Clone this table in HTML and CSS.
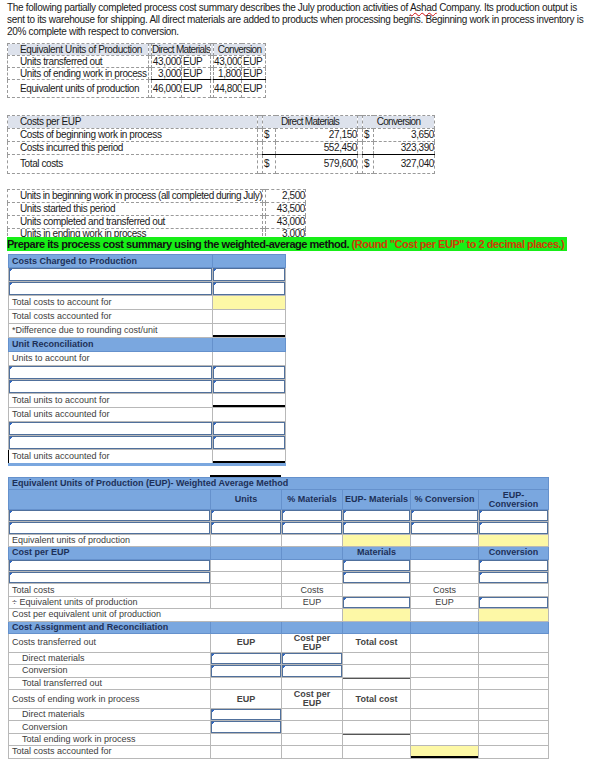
FILE: index.html
```html
<!DOCTYPE html>
<html lang="en">
<head>
    <meta charset="UTF-8">
    <title>Process Cost Summary - Ashad Company</title>
    <link rel="stylesheet" href="styles.css">
</head>
<body>
    <p class="intro">The following partially completed process cost summary describes the July production activities of <span class="spell">Ashad</span> Company. Its production output is<br>sent to its warehouse for shipping. All direct materials are added to products when processing begins. Beginning work in process inventory is<br>20% complete with respect to conversion.</p>

    <table class="sheet t-eu">
        <colgroup><col class="w141"><col class="w3"><col class="w30"><col class="w29"><col class="w3"><col class="w28"><col class="w24"></colgroup>
        <tr class="hd"><td class="lab">Equivalent Units of Production</td><td class="sp"></td><td colspan="2" class="ctr">Direct Materials</td><td class="sp"></td><td colspan="2" class="ctr">Conversion</td></tr>
        <tr><td class="lab">Units transferred out</td><td class="sp"></td><td class="num">43,000</td><td>EUP</td><td class="sp"></td><td class="num">43,000</td><td>EUP</td></tr>
        <tr><td class="lab">Units of ending work in process</td><td class="sp"></td><td class="num">3,000</td><td>EUP</td><td class="sp"></td><td class="num">1,800</td><td>EUP</td></tr>
        <tr class="big"><td class="lab">Equivalent units of production</td><td class="sp"></td><td class="num blk">46,000</td><td class="blk">EUP</td><td class="sp"></td><td class="num blk">44,800</td><td class="blk">EUP</td></tr>
    </table>

    <table class="sheet t-cost">
        <colgroup><col class="w250"><col class="w5"><col class="w13"><col class="w82"><col class="w5"><col class="w11"><col class="w61"></colgroup>
        <tr class="hd"><td class="lab">Costs per EUP</td><td class="sp"></td><td colspan="2" class="ctr">Direct Materials</td><td class="sp"></td><td colspan="2" class="ctr">Conversion</td></tr>
        <tr><td class="lab">Costs of beginning work in process</td><td class="sp"></td><td>$</td><td class="num">27,150</td><td class="sp"></td><td>$</td><td class="num">3,650</td></tr>
        <tr><td class="lab">Costs incurred this period</td><td class="sp"></td><td></td><td class="num">552,450</td><td class="sp"></td><td></td><td class="num">323,390</td></tr>
        <tr class="big"><td class="lab">Total costs</td><td class="sp"></td><td class="blk">$</td><td class="num blk">579,600</td><td class="sp"></td><td class="blk">$</td><td class="num blk">327,040</td></tr>
    </table>

    <table class="sheet t-units">
        <colgroup><col class="w255"><col class="w3"><col class="w40"></colgroup>
        <tr><td class="lab tight">Units in beginning work in process (all completed during July)</td><td class="sp"></td><td class="num">2,500</td></tr>
        <tr><td class="lab">Units started this period</td><td class="sp"></td><td class="num">43,500</td></tr>
        <tr><td class="lab">Units completed and transferred out</td><td class="sp"></td><td class="num">43,000</td></tr>
        <tr class="cut"><td class="lab">Units in ending work in process</td><td class="sp"></td><td class="num">3,000</td></tr>
    </table>

    <div class="banner">Prepare its process cost summary using the weighted-average method. <span class="round">(Round "Cost per EUP" to 2 decimal places.)</span></div>

    <table class="grid t-charged">
        <colgroup><col class="w204"><col class="w73"></colgroup>
        <tr class="hd first"><td>Costs Charged to Production</td><td></td></tr>
        <tr><td class="in"></td><td class="in"></td></tr>
        <tr><td class="in"></td><td class="in"></td></tr>
        <tr><td>Total costs to account for</td><td class="yl"></td></tr>
        <tr><td>Total costs accounted for</td><td></td></tr>
        <tr><td>*Difference due to rounding cost/unit</td><td class="tot"></td></tr>
        <tr class="hd"><td>Unit Reconciliation</td><td></td></tr>
        <tr><td>Units to account for</td><td></td></tr>
        <tr><td class="in"></td><td class="in"></td></tr>
        <tr><td class="in"></td><td class="in"></td></tr>
        <tr><td>Total units to account for</td><td class="tot"></td></tr>
        <tr><td>Total units accounted for</td><td></td></tr>
        <tr><td class="in"></td><td class="in"></td></tr>
        <tr><td class="in"></td><td class="in"></td></tr>
        <tr><td class="lb">Total units accounted for</td><td class="tot"></td></tr>
    </table>

    <div class="mark"></div>
    <table class="grid t-eup">
        <colgroup><col class="w202"><col class="w71"><col class="w61"><col class="w68"><col class="w68"><col class="w70"></colgroup>
        <tr class="hd first"><td colspan="6">Equivalent Units of Production (EUP)- Weighted Average Method</td></tr>
        <tr class="hd tall"><td></td><td class="c">Units</td><td class="c">% Materials</td><td class="c">EUP- Materials</td><td class="c">% Conversion</td><td class="c">EUP-<br>Conversion</td></tr>
        <tr><td class="in"></td><td class="in"></td><td class="in"></td><td class="in"></td><td class="in"></td><td class="in"></td></tr>
        <tr><td class="in"></td><td class="in"></td><td class="in"></td><td class="in"></td><td class="in"></td><td class="in"></td></tr>
        <tr><td>Equivalent units of production</td><td></td><td></td><td class="yl"></td><td></td><td class="yl"></td></tr>
        <tr class="hd"><td>Cost per EUP</td><td></td><td></td><td class="c">Materials</td><td></td><td class="c">Conversion</td></tr>
        <tr><td class="in"></td><td></td><td></td><td class="in"></td><td></td><td class="in"></td></tr>
        <tr><td class="in"></td><td></td><td></td><td class="in"></td><td></td><td class="in"></td></tr>
        <tr><td>Total costs</td><td></td><td class="c">Costs</td><td></td><td class="c">Costs</td><td></td></tr>
        <tr><td>÷ Equivalent units of production</td><td></td><td class="c">EUP</td><td class="in"></td><td class="c">EUP</td><td class="in"></td></tr>
        <tr><td colspan="3">Cost per equivalent unit of production</td><td class="yl"></td><td></td><td class="yl"></td></tr>
        <tr class="hd"><td>Cost Assignment and Reconciliation</td><td></td><td></td><td></td><td></td><td></td></tr>
        <tr class="tall"><td>Costs transferred out</td><td class="c b">EUP</td><td class="c b">Cost per<br>EUP</td><td class="c b">Total cost</td><td></td><td></td></tr>
        <tr><td class="ind">Direct materials</td><td class="in"></td><td class="in"></td><td></td><td></td><td></td></tr>
        <tr><td class="ind">Conversion</td><td class="in"></td><td class="in"></td><td></td><td></td><td></td></tr>
        <tr><td class="ind">Total transferred out</td><td></td><td></td><td class="dt"></td><td></td><td></td></tr>
        <tr class="tall"><td>Costs of ending work in process</td><td class="c b">EUP</td><td class="c b">Cost per<br>EUP</td><td class="c b">Total cost</td><td></td><td></td></tr>
        <tr><td class="ind">Direct materials</td><td class="in"></td><td></td><td></td><td></td><td></td></tr>
        <tr><td class="ind">Conversion</td><td class="in"></td><td></td><td></td><td></td><td></td></tr>
        <tr><td class="ind">Total ending work in process</td><td></td><td></td><td class="dt"></td><td></td><td></td></tr>
        <tr><td>Total costs accounted for</td><td></td><td></td><td></td><td class="yl tot"></td><td></td></tr>
    </table>
</body>
</html>
```

FILE: styles.css
```css
body {
    margin: 0;
    padding: 0 0 0 7px;
    font-family: "Liberation Sans", Arial, sans-serif;
    color: #1a1a1a;
    background-color: #FFFFFF;
}
.intro {
    margin: 2px 0 0;
    font-size: 10px;
    line-height: 12px;
    letter-spacing: -0.32px;
    white-space: nowrap;
}
.spell {
    text-decoration: underline wavy #d01010;
    text-decoration-thickness: 1px;
    text-underline-offset: 1px;
}

/* spreadsheet snippets */
.sheet {
    border-collapse: collapse;
    table-layout: fixed;
    font-size: 10px;
    letter-spacing: -0.4px;
}
.sheet td {
    border: 1px dashed #9a9a9a;
    padding: 0 1px;
    height: 11px;
    line-height: 10px;
    white-space: nowrap;
    overflow: hidden;
}
.sheet .hd td { background-color: #dde2ec; }
.sheet .big td { height: 17px; }
.sheet .cut td { height: 10px; }
.sheet td.lab { padding-left: 12px; }
.sheet td.tight { letter-spacing: -0.47px; }
.sheet td.num { text-align: right; padding: 0; }
.sheet td.ctr { text-align: center; padding: 0; letter-spacing: -0.7px; }
.sheet td.sp { padding: 0; }
.sheet td.blk { border-top: 1px solid #000; }
.t-eu { margin-top: 5px; width: 258px; }
.t-cost { margin-top: 17px; width: 427px; }
.t-cost td { height: 12px; }
.t-cost .big td { height: 18px; }
.t-units { margin-top: 15px; width: 298px; }
.t-units td { height: 12px; }

.w3 { width: 3px; } .w5 { width: 5px; }
.w11 { width: 11px; } .w13 { width: 13px; } .w24 { width: 24px; }
.w28 { width: 28px; } .w29 { width: 29px; } .w30 { width: 30px; }
.w40 { width: 40px; } .w61 { width: 61px; } .w68 { width: 68px; }
.w70 { width: 70px; } .w71 { width: 71px; } .w73 { width: 73px; }
.w82 { width: 82px; } .w141 { width: 141px; } .w202 { width: 202px; }
.w204 { width: 204px; } .w250 { width: 250px; } .w255 { width: 255px; }

.banner {
    position: relative;
    margin-top: -3px;
    width: 560px;
    height: 14px;
    overflow: hidden;
    background-color: #17ee17;
    font-size: 11px;
    line-height: 14px;
    font-weight: bold;
    letter-spacing: -0.47px;
    white-space: nowrap;
    color: #111;
}
.round { color: #cf3c06; }

/* answer grids */
.grid {
    border-collapse: collapse;
    table-layout: fixed;
    margin-left: 1px;
    font-size: 9px;
    color: #3c3c3c;
}
.grid td {
    border: 1px solid #b8b8b8;
    padding: 0 0 0 3px;
    height: 13px;
    line-height: 9px;
    white-space: nowrap;
    background-color: #fff;
}
.grid .hd td {
    background-color: #7aa7df;
    border-color: #6591cc;
    color: #1d3058;
    font-weight: bold;
}
.grid .hd.first td { height: 12px; }
.grid td.in {
    box-shadow: inset 0 0 0 1px #50709c;
    background: linear-gradient(135deg, #2f66c4 2px, transparent 2px) no-repeat 1px 1px / 5px 5px, #fff;
}
.grid td.yl { background-color: #fdf8a6; }
.grid td.tot { box-shadow: inset 0 -2px 0 #000; }
.grid td.lb { border-left: 1px solid #000; }
.grid td.c { text-align: center; padding: 0; }
.grid td.b { font-weight: bold; color: #444; }
.grid td.ind { padding-left: 13px; }
.grid td.dt { box-shadow: inset 0 1px 0 #555; }
.grid .tall td { height: 18px; }

.t-charged {
    margin-top: 3px;
    width: 277px;
    border-bottom: 3px solid #7aa7df;
}
.mark {
    margin: 9px 0 0 203px;
    width: 71px;
    height: 2px;
    background-color: #000;
}
.t-eup { width: 540px; }
.t-eup td { height: 11.4px; }
.t-eup .hd.first td { height: 11px; }
.t-eup .hd.tall td { height: 19px; }
```
